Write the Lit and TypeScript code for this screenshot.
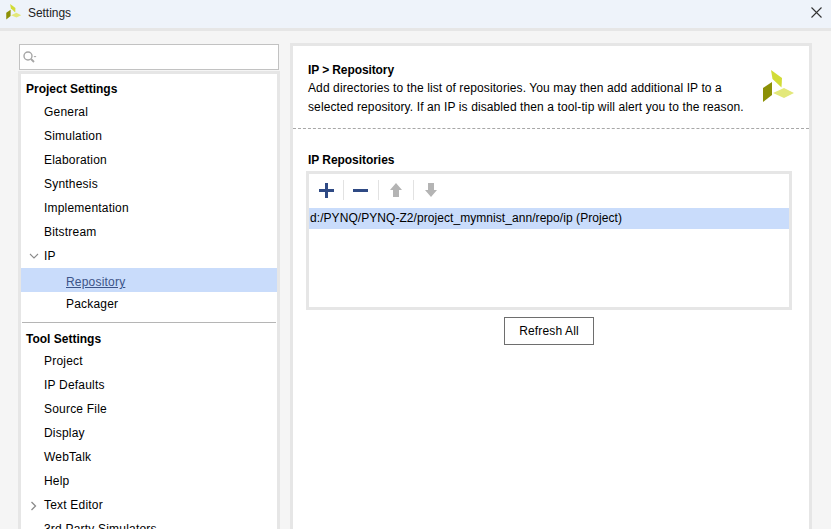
import { LitElement, html, css, svg } from "lit";
import { customElement } from "lit/decorators.js";

const logo = (w: number, h: number) => html`<svg width=${w} height=${h} viewBox="0 0 32 33" aria-hidden="true">
  <polygon points="8,0 19,8 18.500,17.500 9.500,9" fill="#d2dc37"></polygon>
  <polygon points="0,18 9,12 9,25 0,32" fill="#8c9006"></polygon>
  <polygon points="10,23 21,18 31,23 21,28" fill="#e3e87a"></polygon>
</svg>`;

const arrow = (up: boolean) => html`<svg width="14" height="16" viewBox="0 0 14 16" aria-hidden="true">
  ${up
    ? svg`<polygon points="7,1 13,8 10,8 10,15 4,15 4,8 1,8" fill="#b4b4b4"></polygon>`
    : svg`<polygon points="7,15 13,8 10,8 10,1 4,1 4,8 1,8" fill="#b4b4b4"></polygon>`}
</svg>`;

const chevron = (open: boolean) => html`<svg class=${open ? "chev open" : "chev"} width="10" height="10" viewBox="0 0 10 10" aria-hidden="true">
  ${open
    ? svg`<polyline points="1,3 5,7 9,3" fill="none" stroke="#8a8a8a" stroke-width="1.1"></polyline>`
    : svg`<polyline points="2.500,1 6.500,5 2.500,9" fill="none" stroke="#8a8a8a" stroke-width="1.3"></polyline>`}
</svg>`;

@customElement("app-root")
export class AppRoot extends LitElement {
  static styles = css`
    :host {
      display: flex;
      flex-direction: column;
      width: 831px;
      height: 529px;
      overflow: hidden;
      background: #f5f5f5;
      font-family: "Liberation Sans", Arial, sans-serif;
      font-size: 12px;
      color: #000;
    }
    .titlebar {
      flex: none;
      height: 28px;
      box-sizing: border-box;
      background: #eef3fa;
      display: flex;
      align-items: center;
      padding: 0 9px 2px 6px;
      gap: 6px;
    }
    .titlebar > svg:first-child { margin-top: -2px; }
    .titlebar > svg:last-child { margin-top: -2px; }
    .title { flex: 1; color: #222; letter-spacing: -0.05px; }
    .rule { flex: none; height: 3px; background: #e6e6e6; }
    .body {
      flex: 1;
      min-height: 0;
      display: flex;
      align-items: flex-start;
      padding: 12px 19px 0 18px;
      gap: 10px;
    }
    .left { flex: none; width: 262px; display: flex; flex-direction: column; gap: 1px; }
    .search {
      margin: 1px 1px 0;
      height: 26px;
      box-sizing: border-box;
      border: 1px solid #c2c2c2;
      background: #fff;
      display: flex;
      align-items: center;
      padding-left: 3px;
    }
    .tree {
      border: 3px solid #e6e6e6;
      border-bottom: 0;
      background: #fff;
      height: 470px;
      box-sizing: border-box;
      overflow: hidden;
    }
    .group { height: 26px; line-height: 30px; padding-left: 5px; font-weight: 700; }
    .row { height: 24px; display: flex; align-items: center; padding-left: 23px; position: relative; letter-spacing: 0.2px; }
    .row.sub { padding-left: 45px; }
    .row.sel { background: #c9dcfb; padding-top: 4px; box-sizing: border-box; }
    .row.sel span { color: #3c5488; text-decoration: underline; }
    .row.pack { height: 23px; }
    .chev { position: absolute; left: 8px; top: 8px; }
    .chev.open { top: 7px; }
    .divider { height: 1px; background: #b5b5b5; margin: 7px 1px 0; }
    .group.tool { height: 26px; line-height: 32px; }
    .panel {
      flex: 1;
      min-width: 0;
      height: 486px;
      box-sizing: border-box;
      border: 3px solid #e6e6e6;
      border-bottom: 0;
      background: #fff;
    }
    .head {
      height: 83px;
      box-sizing: border-box;
      border-bottom: 1px dashed #a8a8a8;
      padding: 15px 14px 0 15px;
      display: flex;
      justify-content: space-between;
    }
    .head-title { font-weight: 700; line-height: 18px; letter-spacing: -0.1px; }
    .head-text { line-height: 19px; letter-spacing: 0.106px; white-space: nowrap; }
    .head-logo { margin-top: 9px; }
    .content { padding: 20px 17px 0 13px; display: flex; flex-direction: column; align-items: stretch; }
    .label { font-weight: 700; line-height: 22px; padding-left: 2px; letter-spacing: -0.05px; }
    .box { border: 3px solid #e6e6e6; height: 139px; box-sizing: border-box; background: #fff; }
    .toolbar { height: 34px; box-sizing: border-box; display: flex; align-items: center; padding: 0 0 2px 9px; }
    .tb { width: 17px; height: 20px; display: flex; align-items: center; justify-content: center; }
    .tb.shift svg { margin-right: 2px; }
    .sep { width: 1px; height: 20px; background: #e2e2e2; margin: 0 9px 0 8px; }
    .item { height: 21px; background: #c9dcfb; line-height: 21px; padding-left: 1px; letter-spacing: 0.06px; }
    .actions { display: flex; justify-content: center; padding-top: 7px; }
    .btn {
      width: 90px;
      height: 28px;
      box-sizing: border-box;
      border: 1px solid #6e6e6e;
      background: #fff;
      font: inherit;
      letter-spacing: 0.15px;
      color: #000;
      padding: 0;
    }
  `;

  private row(t: string) {
    return html`<div class="row"><span>${t}</span></div>`;
  }

  render() {
    return html`
      <div class="titlebar">
        ${logo(16, 16)}
        <div class="title">Settings</div>
        <svg width="11" height="11" viewBox="0 0 11 11" aria-hidden="true">
          <path d="M.5.5l10 10M10.500.5l-10 10" stroke="#333" stroke-width="1.1" fill="none"></path>
        </svg>
      </div>
      <div class="rule"></div>
      <div class="body">
        <div class="left">
          <div class="search">
            <svg width="16" height="14" viewBox="0 0 16 14" aria-hidden="true">
              <circle cx="5" cy="6" r="4" fill="none" stroke="#a6a6a6" stroke-width="1.4"></circle>
              <path d="M8 9l3 3" stroke="#a6a6a6" stroke-width="1.8"></path>
              <path d="M10.500 6h3l-1.500 1.500z" fill="#a6a6a6"></path>
            </svg>
          </div>
          <div class="tree">
            <div class="group">Project Settings</div>
            ${["General", "Simulation", "Elaboration", "Synthesis", "Implementation", "Bitstream"].map((t) => this.row(t))}
            <div class="row">${chevron(true)}<span>IP</span></div>
            <div class="row sub sel"><span>Repository</span></div>
            <div class="row sub pack"><span>Packager</span></div>
            <div class="divider"></div>
            <div class="group tool">Tool Settings</div>
            ${["Project", "IP Defaults", "Source File", "Display", "WebTalk", "Help"].map((t) => this.row(t))}
            <div class="row">${chevron(false)}<span>Text Editor</span></div>
            ${this.row("3rd Party Simulators")}
          </div>
        </div>
        <div class="panel">
          <div class="head">
            <div>
              <div class="head-title">IP &gt; Repository</div>
              <div class="head-text">Add directories to the list of repositories. You may then add additional IP to a<br />selected repository. If an IP is disabled then a tool-tip will alert you to the reason.</div>
            </div>
            <div class="head-logo">${logo(32, 33)}</div>
          </div>
          <div class="content">
            <div class="label">IP Repositories</div>
            <div class="box">
              <div class="toolbar">
                <div class="tb">
                  <svg width="15" height="15" viewBox="0 0 15 15" aria-hidden="true"><path d="M6 0h3v6h6v3H9v6H6V9H0V6h6z" fill="#2f4a84"></path></svg>
                </div>
                <div class="sep"></div>
                <div class="tb shift">
                  <svg width="15" height="3" viewBox="0 0 15 3" aria-hidden="true"><rect width="15" height="3" fill="#2f4a84"></rect></svg>
                </div>
                <div class="sep"></div>
                <div class="tb shift">${arrow(true)}</div>
                <div class="sep"></div>
                <div class="tb shift">${arrow(false)}</div>
              </div>
              <div class="item">d:/PYNQ/PYNQ-Z2/project_mymnist_ann/repo/ip (Project)</div>
            </div>
            <div class="actions"><button class="btn">Refresh All</button></div>
          </div>
        </div>
      </div>
    `;
  }
}
